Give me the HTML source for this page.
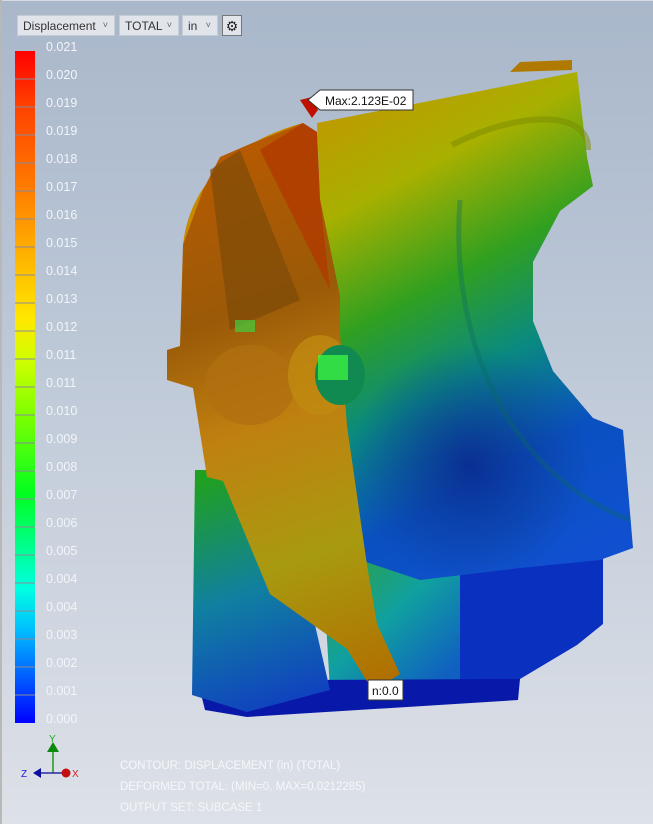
<!DOCTYPE html>
<html><head><meta charset="utf-8"><style>
html,body{margin:0;padding:0}
body{width:653px;height:824px;overflow:hidden;position:relative;font-family:"Liberation Sans",sans-serif;
background:linear-gradient(180deg,#a9b7ca 0%,#b9c5d5 35%,#cdd4df 70%,#dde1e8 100%);}
.lb{position:absolute;left:0;top:0;width:2px;height:824px;background:#b8b8b8}
.tb{position:absolute;left:0;top:0;width:653px;height:1px;background:#d8dce2}
.dd{position:absolute;top:15px;height:21px;background:#e1e5eb;border:1px solid #c6ccd4;font-size:12px;color:#333;line-height:21px;padding-left:5px;box-sizing:border-box}
.dd span{position:absolute;right:6px;top:-1px;font-size:9px;color:#666}
.lab{position:absolute;left:46px;font-size:12.5px;color:#f3f5f8}
.info{position:absolute;left:120px;font-size:11.5px;color:#f6f7fa}
</style></head><body>
<div class="tb"></div><div class="lb"></div>
<div class="dd" style="left:17px;width:98px">Displacement<span>˅</span></div>
<div class="dd" style="left:119px;width:60px">TOTAL<span>˅</span></div>
<div class="dd" style="left:182px;width:36px">in<span>˅</span></div>
<div class="dd" style="left:222px;width:20px;padding:0;text-align:center;font-size:14px;border-color:#777;color:#222">⚙</div>

<div style="position:absolute;left:15px;top:51px;width:20px;height:672px;background:linear-gradient(180deg,#ff0000 0%,#ff4000 8%,#ff7a00 20%,#ffb000 30%,#ffe800 40%,#d0ff00 46%,#80ff00 54%,#00ff20 66%,#00ff90 74%,#00ffe0 80%,#00c0ff 86%,#0060ff 93%,#0000ff 100%)"></div>
<svg style="position:absolute;left:15px;top:51px" width="20" height="672">
<g stroke="#8a8a9a" stroke-width="1">
<line x1="0" x2="20" y1="28" y2="28"/><line x1="0" x2="20" y1="56" y2="56"/><line x1="0" x2="20" y1="84" y2="84"/><line x1="0" x2="20" y1="112" y2="112"/><line x1="0" x2="20" y1="140" y2="140"/><line x1="0" x2="20" y1="168" y2="168"/><line x1="0" x2="20" y1="196" y2="196"/><line x1="0" x2="20" y1="224" y2="224"/><line x1="0" x2="20" y1="252" y2="252"/><line x1="0" x2="20" y1="280" y2="280"/><line x1="0" x2="20" y1="308" y2="308"/><line x1="0" x2="20" y1="336" y2="336"/><line x1="0" x2="20" y1="364" y2="364"/><line x1="0" x2="20" y1="392" y2="392"/><line x1="0" x2="20" y1="420" y2="420"/><line x1="0" x2="20" y1="448" y2="448"/><line x1="0" x2="20" y1="476" y2="476"/><line x1="0" x2="20" y1="504" y2="504"/><line x1="0" x2="20" y1="532" y2="532"/><line x1="0" x2="20" y1="560" y2="560"/><line x1="0" x2="20" y1="588" y2="588"/><line x1="0" x2="20" y1="616" y2="616"/><line x1="0" x2="20" y1="644" y2="644"/>
</g></svg>
<div class="lab" style="top:40px">0.021</div><div class="lab" style="top:68px">0.020</div><div class="lab" style="top:96px">0.019</div><div class="lab" style="top:124px">0.019</div><div class="lab" style="top:152px">0.018</div><div class="lab" style="top:180px">0.017</div><div class="lab" style="top:208px">0.016</div><div class="lab" style="top:236px">0.015</div><div class="lab" style="top:264px">0.014</div><div class="lab" style="top:292px">0.013</div><div class="lab" style="top:320px">0.012</div><div class="lab" style="top:348px">0.011</div><div class="lab" style="top:376px">0.011</div><div class="lab" style="top:404px">0.010</div><div class="lab" style="top:432px">0.009</div><div class="lab" style="top:460px">0.008</div><div class="lab" style="top:488px">0.007</div><div class="lab" style="top:516px">0.006</div><div class="lab" style="top:544px">0.005</div><div class="lab" style="top:572px">0.004</div><div class="lab" style="top:600px">0.004</div><div class="lab" style="top:628px">0.003</div><div class="lab" style="top:656px">0.002</div><div class="lab" style="top:684px">0.001</div><div class="lab" style="top:712px">0.000</div>

<svg style="position:absolute;left:0;top:0" width="653" height="824">
<defs>
<linearGradient id="shell" x1="300" y1="80" x2="560" y2="560" gradientUnits="userSpaceOnUse">
<stop offset="0" stop-color="#c89000"/><stop offset="0.25" stop-color="#a8b000"/><stop offset="0.45" stop-color="#30a020"/><stop offset="0.62" stop-color="#0a8a80"/><stop offset="0.8" stop-color="#0a50c0"/><stop offset="1" stop-color="#1050d0"/></linearGradient>
<radialGradient id="dark" cx="470" cy="465" r="120" gradientUnits="userSpaceOnUse"><stop offset="0" stop-color="#0a2a90" stop-opacity="0.9"/><stop offset="1" stop-color="#0a3a90" stop-opacity="0"/></radialGradient>
<linearGradient id="fan" x1="200" y1="150" x2="380" y2="680" gradientUnits="userSpaceOnUse">
<stop offset="0" stop-color="#b85a00"/><stop offset="0.3" stop-color="#9a5a08"/><stop offset="0.5" stop-color="#c08010"/><stop offset="0.75" stop-color="#a89a10"/><stop offset="1" stop-color="#b07000"/></linearGradient>
<linearGradient id="blk" x1="200" y1="480" x2="280" y2="710" gradientUnits="userSpaceOnUse">
<stop offset="0" stop-color="#20a020"/><stop offset="0.5" stop-color="#1080a0"/><stop offset="1" stop-color="#1040c0"/></linearGradient>
<linearGradient id="mid" x1="330" y1="560" x2="440" y2="680" gradientUnits="userSpaceOnUse">
<stop offset="0" stop-color="#30a040"/><stop offset="0.5" stop-color="#10a0a0"/><stop offset="1" stop-color="#1060c0"/></linearGradient>
</defs>
<!-- lower box -->
<polygon points="440,540 603,545 603,624 577,645 520,679 440,690" fill="#0a30c0"/>
<!-- middle lower fill -->
<polygon points="320,520 460,570 460,690 330,690" fill="url(#mid)"/>
<!-- base -->
<polygon points="200,690 300,680 520,679 518,700 247,717 205,710" fill="#0818a8"/>
<!-- back body ellipse -->
<path d="M183,245 C190,180 240,140 303,123 L330,300 L330,480 L223,481 L193,388 Z" fill="#c88a00"/>
<!-- left lower block -->
<polygon points="195,470 240,470 300,560 330,690 247,712 192,695" fill="url(#blk)"/>
<!-- shell -->
<path d="M317,123 L577,72 L587,157 L593,186 L560,211 L533,262 L533,321 L553,371 L593,418 L623,430 L633,548 L600,560 L520,568 L420,580 L360,560 L320,470 L320,200 Z" fill="url(#shell)"/>
<path d="M317,123 L577,72 L587,157 L593,186 L560,211 L533,262 L533,321 L553,371 L593,418 L623,430 L633,548 L600,560 L520,568 L420,580 L360,560 L320,470 L320,200 Z" fill="url(#dark)"/>
<path d="M452,145 C520,110 590,110 588,150" stroke="#7a8a00" stroke-width="6" fill="none" opacity="0.5"/>
<path d="M460,200 C450,330 500,470 630,520" stroke="#0a6a60" stroke-width="5" fill="none" opacity="0.35"/>
<polygon points="510,72 520,62 572,60 572,70" fill="#b07a00"/>
<!-- fan -->
<polygon points="220,157 250,144 303,123 317,132 320,199 340,296 340,334 347,426 367,565 377,624 400,674 373,691 347,649 270,594 223,481 207,477 193,388 167,380 167,350 180,346 183,245 203,190" fill="url(#fan)"/>
<polygon points="260,150 303,123 317,132 320,199 330,290 300,230" fill="#b03a00" opacity="0.8"/>
<polygon points="210,170 240,150 300,300 230,330" fill="#7e4a08" opacity="0.7"/>
<ellipse cx="250" cy="385" rx="45" ry="40" fill="#b07010" opacity="0.8"/>
<ellipse cx="320" cy="375" rx="32" ry="40" fill="#c08a10" opacity="0.8"/>
<ellipse cx="340" cy="375" rx="25" ry="30" fill="#108a50"/>
<rect x="318" y="355" width="30" height="25" fill="#40ff40" opacity="0.7"/>
<rect x="235" y="320" width="20" height="12" fill="#40d040" opacity="0.7"/>
<polygon points="300,100 312,97 318,110 312,118" fill="#c01000"/>
<!-- Max label -->
<polygon points="308,100 320,90 413,90 413,110 320,110" fill="#fff" stroke="#333"/>
<text x="325" y="105" font-size="12" fill="#111" font-family="Liberation Sans">Max:2.123E-02</text>
<rect x="368" y="680" width="35" height="20" fill="#fff" stroke="#333"/>
<text x="372" y="695" font-size="12" fill="#111" font-family="Liberation Sans">n:0.0</text>
<!-- triad -->
<line x1="53" y1="750" x2="53" y2="773" stroke="#1a9a1a" stroke-width="1.5"/>
<line x1="40" y1="773" x2="62" y2="773" stroke="#2a2aa0" stroke-width="1.5"/>
<polygon points="47,752 53,742 59,752" fill="#0a8a0a"/>
<polygon points="33,773 41,768 41,778" fill="#1010a0"/>
<circle cx="66" cy="773" r="4.5" fill="#c01010"/>
<text x="49" y="742" font-size="10" fill="#2a2">Y</text>
<text x="21" y="777" font-size="10" fill="#22c">Z</text>
<text x="72" y="777" font-size="10" fill="#d22">X</text>
</svg>
<div class="info" style="top:760px">CONTOUR: DISPLACEMENT (in) (TOTAL)</div>
<div class="info" style="top:781px">DEFORMED TOTAL: (MIN=0, MAX=0.0212285)</div>
<div class="info" style="top:802px">OUTPUT SET: SUBCASE 1</div>
</body></html>
